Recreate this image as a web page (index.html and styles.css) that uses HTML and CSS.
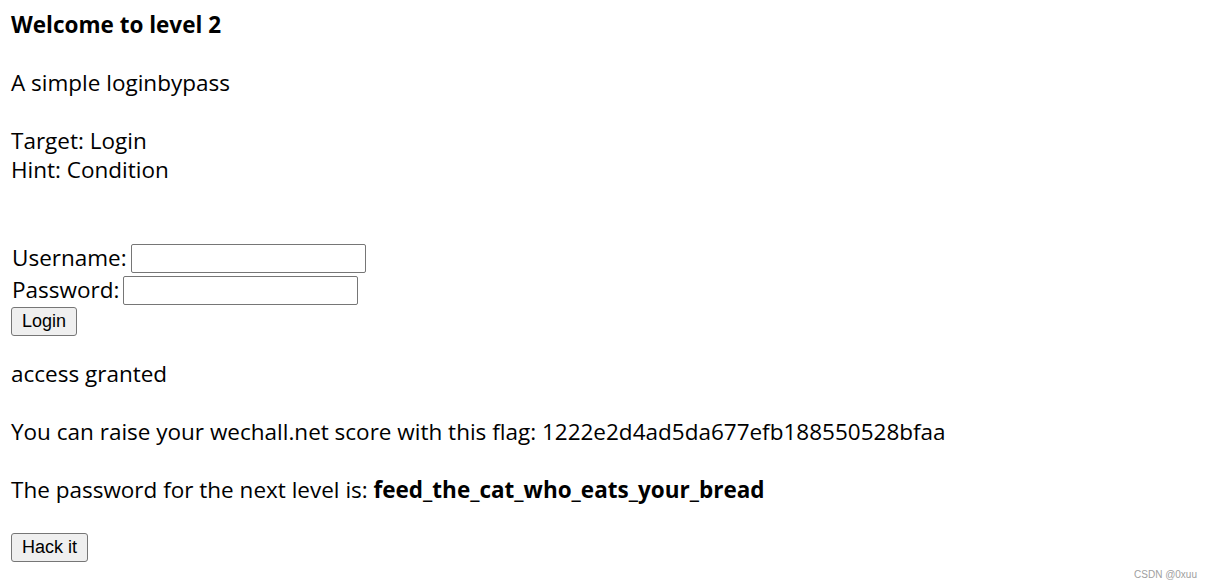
FILE: index.html
```html
<!DOCTYPE html>
<html>
<head>
<meta charset="utf-8">
<link rel="stylesheet" href="styles.css">
</head>
<body>
<div class="page">
  <div class="line title">Welcome to level 2</div>
  <div class="line blank"></div>
  <div class="line">A simple loginbypass</div>
  <div class="line blank"></div>
  <div class="line">Target: Login</div>
  <div class="line">Hint: Condition</div>
  <div class="line blank"></div>
  <div class="line blank"></div>
  <form class="form">
    <div class="row"><span>Username:</span><input class="field" type="text"></div>
    <div class="row"><span>Password:</span><input class="field" type="password"></div>
    <button class="btn login" type="button">Login</button>
  </form>
  <div class="line result">access granted</div>
  <div class="line blank"></div>
  <div class="line">You can raise your wechall.net score with this flag: 1222e2d4ad5da677efb188550528bfaa</div>
  <div class="line blank"></div>
  <div class="line">The password for the next level is: <b>feed_the_cat_who_eats_your_bread</b></div>
  <div class="line blank"></div>
  <button class="btn hack" type="button">Hack it</button>
</div>
<div class="watermark">CSDN @0xuu</div>
</body>
</html>
```
FILE: styles.css
```css
html, body {
  margin: 0;
  padding: 0;
  background: #ffffff;
}
body {
  width: 1210px;
  height: 588px;
  overflow: hidden;
  position: relative;
}
.page {
  padding: 10px 11px 0 11px;
  font-family: "Open Sans", "Noto Sans", sans-serif;
  font-size: 22.5px;
  line-height: 29px;
  color: #000;
}
.line {
  height: 29px;
  white-space: nowrap;
}
.title {
  font-weight: bold;
}
.form {
  margin: 0;
}
.row {
  display: flex;
  align-items: center;
  gap: 4px;
  height: 32px;
  padding-left: 1px;
}
.row span {
  position: relative;
  top: -1px;
}
.field {
  box-sizing: border-box;
  width: 235px;
  height: 29px;
  border: 1px solid #767676;
  border-radius: 2px;
  background: #fff;
  margin: 0;
  padding: 0 2px;
}
.btn {
  display: block;
  box-sizing: border-box;
  height: 29px;
  padding: 0 10px;
  margin: 0;
  font-family: "Liberation Sans", Arial, sans-serif;
  font-size: 18px;
  color: #000;
  background: #efefef;
  border: 1px solid #767676;
  border-radius: 3px;
}
.login {
  margin-top: 1px;
}
.result {
  margin-top: 23px;
}
.hack {
  margin-top: 0;
}
.watermark {
  position: absolute;
  right: 13px;
  bottom: 8px;
  font-family: "Liberation Sans", Arial, sans-serif;
  font-size: 10px;
  color: #a0a0a0;
}
```
